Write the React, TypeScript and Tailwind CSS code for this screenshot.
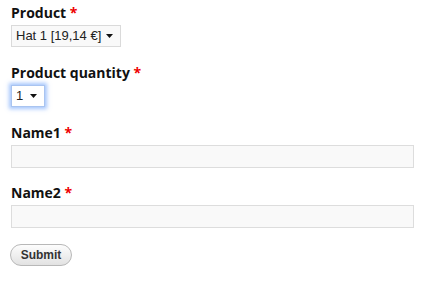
import { useState } from 'react';

function Caret() {
  return (
    <svg width="7" height="4" viewBox="0 0 7 4" className="shrink-0">
      <path d="M0 0h7L3.5 4z" fill="#111" />
    </svg>
  );
}

function Label({ children }: { children: React.ReactNode }) {
  return (
    <label className="block text-[14px] leading-[18px] font-bold text-[#111] font-['Open_Sans',sans-serif]">
      {children} <span className="text-[#ee0000]">*</span>
    </label>
  );
}

export default function App() {
  const [name1, setName1] = useState('');
  const [name2, setName2] = useState('');

  return (
    <div className="w-[445px] h-[290px] bg-white pl-[11px] pt-[4px] font-['Liberation_Sans',sans-serif]">
      <div>
        <Label>Product</Label>
        <div className="mt-[3px] w-[110px] h-[22px] border border-[#dadada] bg-[#f9f9f9] flex items-center justify-between pl-[4px] pr-[7px] text-[13px] text-[#222]">
          <span>Hat 1 [19,14 €]</span>
          <Caret />
        </div>
      </div>

      <div className="mt-[17px]">
        <Label>Product quantity</Label>
        <div className="mt-[3px] w-[34px] h-[22px] border border-[#a9c4f0] bg-white shadow-[0_0_4px_2px_rgba(90,150,250,0.55)] flex items-center justify-between pl-[4px] pr-[7px] text-[13px] text-[#222]">
          <span>1</span>
          <Caret />
        </div>
      </div>

      <div className="mt-[17px]">
        <Label>Name1</Label>
        <input
          value={name1}
          onChange={(e) => setName1(e.target.value)}
          className="block mt-[3px] w-[403px] h-[23px] border border-[#dddddd] bg-[#f9f9f9] outline-none"
        />
      </div>

      <div className="mt-[16px]">
        <Label>Name2</Label>
        <input
          value={name2}
          onChange={(e) => setName2(e.target.value)}
          className="block mt-[3px] w-[403px] h-[23px] border border-[#dddddd] bg-[#f9f9f9] outline-none"
        />
      </div>

      <button className="mt-[16px] ml-[-1px] h-[22px] w-[62px] rounded-full border border-[#b8b8b8] bg-gradient-to-b from-[#fdfdfd] to-[#e2e2e2] text-[12px] font-bold text-[#333] font-['Liberation_Sans',sans-serif]">
        Submit
      </button>
    </div>
  );
}
